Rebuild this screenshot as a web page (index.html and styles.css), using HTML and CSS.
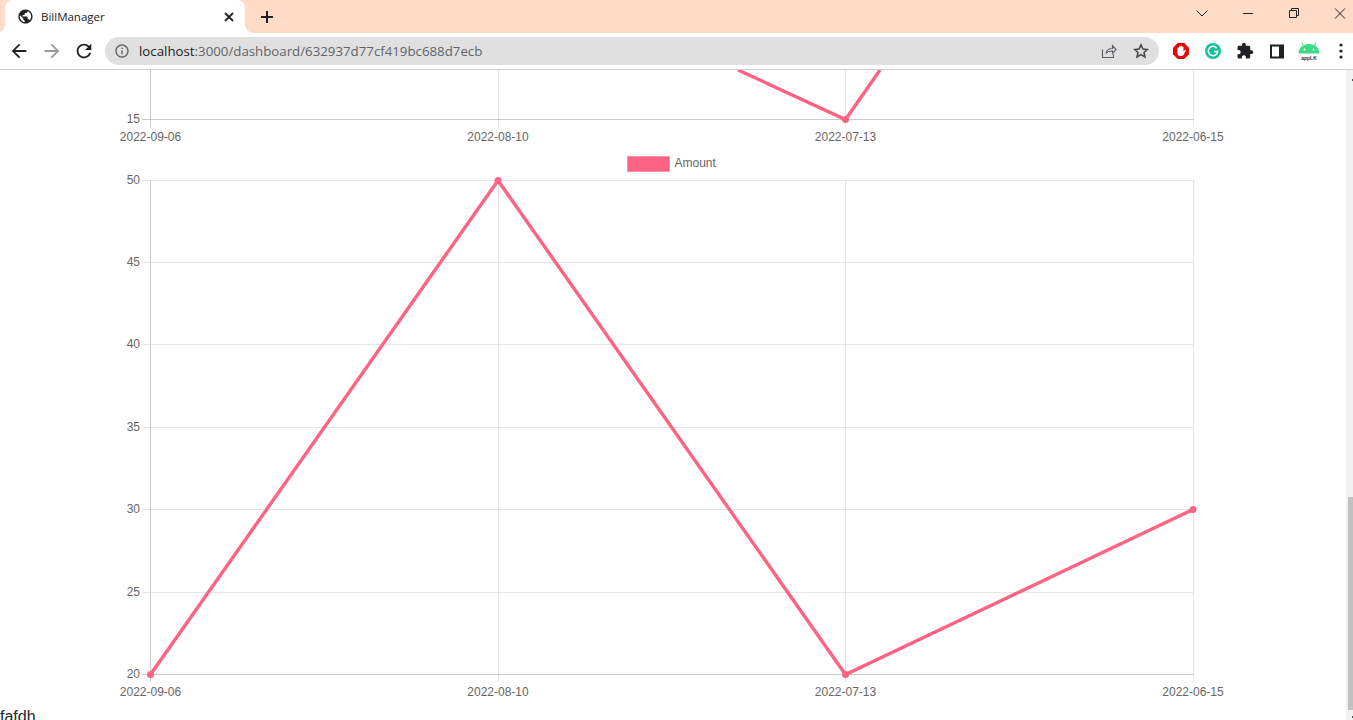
FILE: index.html
```html
<!DOCTYPE html>
<html lang="en">
<head>
<meta charset="utf-8">
<title>BillManager</title>
<link rel="stylesheet" href="styles.css">
</head>
<body>
<div class="window">
  <header class="tabstrip">
    <div class="tab">
      <svg class="favicon" viewBox="0 0 24 24"><path fill="#202124" d="M12 2C6.48 2 2 6.48 2 12s4.48 10 10 10 10-4.48 10-10S17.52 2 12 2zm-1 17.930c-3.950-.49-7-3.850-7-7.930 0-.62.08-1.210.21-1.790L9 15v1c0 1.100.9 2 2 2v1.930zm6.900-2.540c-.26-.81-1-1.390-1.900-1.390h-1v-3c0-.55-.45-1-1-1H8v-2h2c.55 0 1-.45 1-1V7h2c1.100 0 2-.9 2-2v-.41c2.930 1.190 5 4.060 5 7.410 0 2.080-.8 3.970-2.100 5.390z"/></svg>
      <span class="tab-title">BillManager</span>
      <svg class="tab-close" viewBox="0 0 10 10"><path d="M1 1l8 8M9 1l-8 8"/></svg>
    </div>
    <svg class="new-tab" viewBox="0 0 12 12"><path d="M6 0v12M0 6h12"/></svg>
    <div class="window-controls">
      <svg class="win-icon" viewBox="0 0 46 20"><path d="M17.500 7.500l5.500 5.500 5.500-5.500"/></svg>
      <svg class="win-icon" viewBox="0 0 46 20"><path d="M18 10.500h10"/></svg>
      <svg class="win-icon" viewBox="0 0 46 20"><path d="M18.500 7.500h7v7h-7zM20.500 7.500v-2h7v7h-2"/></svg>
      <svg class="win-icon" viewBox="0 0 46 20"><path d="M18 5.500l10 10M28 5.500l-10 10"/></svg>
    </div>
  </header>

  <nav class="toolbar">
    <svg class="nav-icon" viewBox="0 0 24 24"><path fill="#202124" d="M20 11H7.830l5.590-5.590L12 4l-8 8 8 8 1.410-1.410L7.830 13H20v-2z"/></svg>
    <svg class="nav-icon" viewBox="0 0 24 24"><path fill="#9a9a9a" d="M4 11h12.170l-5.590-5.590L12 4l8 8-8 8-1.410-1.410L16.170 13H4v-2z"/></svg>
    <svg class="nav-icon" viewBox="0 0 24 24"><path fill="#202124" d="M17.650 6.350C16.200 4.900 14.210 4 12 4c-4.420 0-7.990 3.580-7.990 8s3.570 8 7.990 8c3.730 0 6.840-2.550 7.730-6h-2.080c-.82 2.330-3.040 4-5.650 4-3.310 0-6-2.690-6-6s2.690-6 6-6c1.660 0 3.140.69 4.220 1.780L13 11h7V4l-2.350 2.350z"/></svg>
    <div class="omnibox">
      <svg class="info-icon" viewBox="0 0 24 24"><path fill="#5f6368" d="M11 7h2v2h-2zm0 4h2v6h-2zm1-9C6.480 2 2 6.480 2 12s4.480 10 10 10 10-4.480 10-10S17.520 2 12 2zm0 18c-4.410 0-8-3.590-8-8s3.590-8 8-8 8 3.590 8 8-3.590 8-8 8z"/></svg>
      <span class="url"><span class="url-host">localhost</span>:3000/dashboard/632937d77cf419bc688d7ecb</span>
      <svg class="omni-icon share-icon" viewBox="0 0 16 16"><path d="M1.500 6.500v8h11v-3M5 10.500c.5-3.500 3-5 6.500-5V2.500l3.500 4-3.500 4V8C8.500 8 6.500 8.500 5 10.500z"/></svg>
      <svg class="omni-icon star-icon" viewBox="0 0 16 16"><path d="M8 1.800l1.900 4.200 4.500.5-3.400 3 1 4.500L8 11.700 4 14l1-4.500-3.400-3 4.500-.5z"/></svg>
    </div>
    <div class="extensions">
      <svg class="ext-icon" viewBox="0 0 18 18"><path fill="#e60a0a" d="M5.700 1h6.600L17 5.700v6.600L12.300 17H5.700L1 12.300V5.700z"/><path fill="#fff" d="M5.500 8.500V6a.8.8 0 0 1 1.500 0V4.500a.8.8 0 0 1 1.500 0V4a.8.8 0 0 1 1.500 0v1a.8.8 0 0 1 1.500 0v4.500l1-1.300c.6-.6 1.500 0 1 .8L11.500 13c-.6.700-1.200 1-2 1H8c-1.500 0-2.500-1-2.500-2.500z"/></svg>
      <svg class="ext-icon" viewBox="0 0 18 18"><circle cx="9" cy="9" r="8" fill="#15c39a"/><path d="M12.800 6.200A4.700 4.700 0 1 0 13.700 9.500h-3.700" fill="none" stroke="#fff" stroke-width="1.600"/></svg>
      <svg class="ext-icon" viewBox="0 0 24 24"><path fill="#202124" d="M20.500 11H19V7c0-1.100-.9-2-2-2h-4V3.500C13 2.120 11.880 1 10.500 1S8 2.120 8 3.500V5H4c-1.100 0-1.990.9-1.990 2v3.800H3.500c1.490 0 2.700 1.210 2.700 2.700s-1.210 2.700-2.700 2.700H2V20c0 1.100.9 2 2 2h3.800v-1.500c0-1.490 1.210-2.700 2.700-2.700 1.490 0 2.700 1.210 2.700 2.700V22H17c1.100 0 2-.9 2-2v-4h1.500c1.380 0 2.500-1.120 2.500-2.500S21.880 11 20.500 11z"/></svg>
      <svg class="ext-icon" viewBox="0 0 18 18"><path fill="#202124" d="M2 2.500h14v14H2zm2 2v10h7v-10z" fill-rule="evenodd"/></svg>
      <svg class="ext-icon android" viewBox="0 0 22 20">
        <path fill="none" stroke="#3ddc84" d="M5.500 4.500L4 1.500M16.500 4.500L18 1.500"/>
        <path fill="#3ddc84" d="M0.500 12.500C.8 6.500 5 3 11 3s10.200 3.500 10.500 9.500z"/>
        <circle cx="6.500" cy="8.500" r="1" fill="#fff"/><circle cx="15.500" cy="8.500" r="1" fill="#fff"/>
        <text class="android-label" x="11" y="18.500">appLK</text>
      </svg>
      <svg class="ext-icon" viewBox="0 0 18 18"><circle cx="9" cy="3" r="1.600" fill="#202124"/><circle cx="9" cy="9" r="1.600" fill="#202124"/><circle cx="9" cy="15" r="1.600" fill="#202124"/></svg>
    </div>
  </nav>

  <div class="viewport">
    <main class="page">
      <svg class="chart chart-top" viewBox="0 70 1346 85">
        <path class="grid" d="M498.500 70v57M845.500 70v57M1193.500 70v57"/>
        <path class="axis" d="M150.500 70v57M142 119.500h1052"/>
        <text class="tick-y" x="140" y="122.500">15</text>
        <text class="tick-x" x="150.500" y="141">2022-09-06</text>
        <text class="tick-x" x="498" y="141">2022-08-10</text>
        <text class="tick-x" x="845.500" y="141">2022-07-13</text>
        <text class="tick-x" x="1193" y="141">2022-06-15</text>
        <path class="line" d="M738 70L845.500 119.500L880 70"/>
        <circle class="point" cx="845.500" cy="119.500" r="3.500"/>
      </svg>

      <svg class="chart chart-main" viewBox="0 155 1346 545">
        <rect class="legend-box" x="627.500" y="156.500" width="42" height="15"/>
        <text class="legend-label" x="674.500" y="167">Amount</text>
        <path class="grid" d="M142 180.500h1052M142 262.500h1052M142 344.500h1052M142 427.500h1052M142 509.500h1052M142 592.500h1052M498.500 180v502M845.500 180v502M1193.500 180v502"/>
        <path class="axis" d="M150.500 180v502M142 674.500h1052"/>
        <text class="tick-y" x="140" y="183.500">50</text>
        <text class="tick-y" x="140" y="265.500">45</text>
        <text class="tick-y" x="140" y="347.500">40</text>
        <text class="tick-y" x="140" y="431">35</text>
        <text class="tick-y" x="140" y="512.500">30</text>
        <text class="tick-y" x="140" y="595.500">25</text>
        <text class="tick-y" x="140" y="677.500">20</text>
        <text class="tick-x" x="150.500" y="696">2022-09-06</text>
        <text class="tick-x" x="498" y="696">2022-08-10</text>
        <text class="tick-x" x="845.500" y="696">2022-07-13</text>
        <text class="tick-x" x="1193" y="696">2022-06-15</text>
        <path class="line" d="M150.500 674.500L498 180.500L845.500 674.500L1193 509.500"/>
        <circle class="point" cx="150.500" cy="674.500" r="3.500"/>
        <circle class="point" cx="498" cy="180.500" r="3.500"/>
        <circle class="point" cx="845.500" cy="674.500" r="3.500"/>
        <circle class="point" cx="1193" cy="509.500" r="3.500"/>
      </svg>

      <p class="note">fafdh</p>
    </main>
    <aside class="scrollbar"><div class="scroll-thumb"></div></aside>
  </div>
</div>
</body>
</html>
```
FILE: styles.css
```css
* { box-sizing: border-box; }
html, body { margin: 0; height: 100%; overflow: hidden; background: #fff; }
svg { display: block; flex: none; }

.window { display: flex; flex-direction: column; width: 1353px; height: 720px; overflow: hidden; }

/* Tab strip */
.tabstrip { display: flex; align-items: center; height: 33px; flex: none; background: #fddbc7; padding-left: 5px; }
.tab { position: relative; display: flex; align-items: center; width: 240px; height: 33px; padding: 0 11px 0 12px; background: #fff; border-radius: 8px 8px 0 0; }
.tab::before, .tab::after { content: ""; position: absolute; bottom: 0; width: 8px; height: 8px; }
.tab::before { left: -8px; background: radial-gradient(circle at 0 0, #fddbc7 7.5px, #fff 8px); }
.tab::after { right: -8px; background: radial-gradient(circle at 100% 0, #fddbc7 7.5px, #fff 8px); }
.favicon { width: 17px; height: 17px; }
.tab-title { margin-left: 7px; font: 11.500px "Open Sans", sans-serif; color: #202124; flex: 1; }
.tab-close { width: 10px; height: 10px; fill: none; stroke: #202124; stroke-width: 1.800; }
.new-tab { width: 12px; height: 12px; margin-left: 16px; fill: none; stroke: #202124; stroke-width: 2; }
.window-controls { display: flex; margin-left: auto; margin-right: -10px; }
.win-icon { width: 46px; height: 20px; margin-top: -7px; fill: none; stroke: #202124; stroke-width: 1; }

/* Toolbar */
.toolbar { display: flex; align-items: center; height: 37px; flex: none; background: #fff; border-bottom: 1px solid #cfcfcf; padding: 0 3px 1px 8px; }
.nav-icon { width: 22px; height: 22px; margin-right: 10.500px; }
.omnibox { display: flex; align-items: center; width: 1054px; height: 28px; margin-left: -.5px; background: #e0e0e0; border-radius: 14px; padding: 0 10px 0 9px; }
.info-icon { width: 16px; height: 16px; }
.url { margin-left: 9px; flex: 1; font: 13.270px "Open Sans", sans-serif; color: #5f6368; white-space: nowrap; }
.url-host { color: #202124; }
.omni-icon { width: 16px; height: 16px; fill: none; stroke: #5f6368; stroke-width: 1.200; }
.share-icon { margin-right: 16px; }
.star-icon { stroke-width: 1.500; stroke: #444; }
.extensions { display: flex; align-items: center; gap: 14px; margin-left: 13px; }
.ext-icon { width: 18px; height: 18px; }
.extensions .android { width: 22px; height: 20px; margin: 0 -2px; }
.android-label { font: bold 5px "Liberation Sans", sans-serif; text-anchor: middle; fill: #333; }

/* Page */
.viewport { display: flex; flex: 1; min-height: 0; }
.page { flex: 1; min-width: 0; overflow: hidden; background: #fff; }
.chart { width: 1346px; }
.chart-top { height: 85px; }
.chart-main { height: 545px; }
.grid { fill: none; stroke: #e5e5e5; stroke-width: 1; }
.axis { fill: none; stroke: #cbcbcb; stroke-width: 1; }
.line { fill: none; stroke: #ff6384; stroke-width: 3.400; stroke-linejoin: miter; }
.point { fill: #ff6384; }
.tick-x, .tick-y, .legend-label { font: 12px "Liberation Sans", Arial, sans-serif; fill: #666; }
.tick-x { text-anchor: middle; }
.tick-y { text-anchor: end; }
.legend-box { fill: #ff6384; stroke: #ff93a9; stroke-width: 1; }
.note { margin: 5px 0 0; font: 16px/1.500 "Liberation Sans", Arial, sans-serif; color: #212529; }

/* Scrollbar */
.scrollbar {
  flex: none;
  width: 7px;
  padding: 427px 0 0 2px;
  background:
    linear-gradient(#505050, #505050) no-repeat 5.500px 9px / 1.500px 2px,
    linear-gradient(#505050, #505050) no-repeat 5.500px 646px / 1.500px 2px,
    #f1f1f1;
}
.scroll-thumb { width: 5px; height: 213px; background: #c1c1c1; }
```
